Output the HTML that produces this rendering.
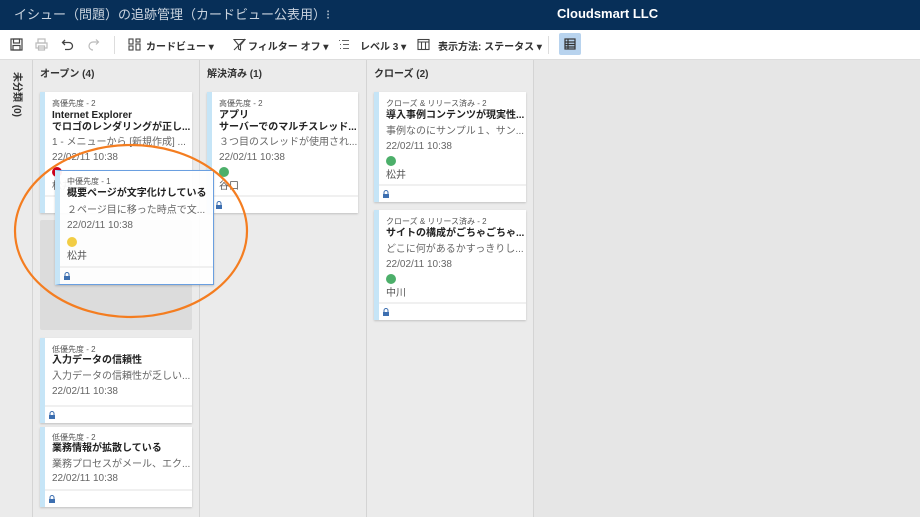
<!DOCTYPE html>
<html><head><meta charset="utf-8"><style>
*{margin:0;padding:0;box-sizing:border-box}
body{width:920px;height:517px;overflow:hidden;background:#e6e6e6;font-family:"Liberation Sans","Noto Sans CJK JP",sans-serif;position:relative;color:#333}
.hdr{position:absolute;left:0;top:0;width:920px;height:30px;background:#072f58;color:#fff}
.tb{position:absolute;left:0;top:30px;width:920px;height:30px;background:#fff;border-bottom:1px solid #ddd}
.a{position:absolute;white-space:nowrap}
.col{position:absolute;top:60px;height:457px;background:#ebebeb;border-right:1px solid #d4d4d4}
.ch{position:absolute;top:68px;font-size:10px;font-weight:bold;color:#333;line-height:14px}
.card{position:absolute;background:#fff;box-shadow:0 1px 2px rgba(0,0,0,.18);border-left:5px solid #c6e5f7;overflow:hidden}
.card div{line-height:12px}
.card .l{position:absolute;left:7px;font-size:8px;color:#555;white-space:nowrap}
.card .t{position:absolute;left:7px;font-size:10px;font-weight:bold;color:#222;white-space:nowrap}
.card .d{position:absolute;left:7px;font-size:10px;color:#666;white-space:nowrap}
.card .n{position:absolute;left:7px;font-size:10px;color:#555;white-space:nowrap}
.card .dot{position:absolute;left:7px;width:10px;height:10px;border-radius:50%}
.card .f{position:absolute;left:0;right:0;bottom:0;height:18px;border-top:2px solid #f0f0f0}
.lock{position:absolute;left:3px;top:4px;width:8px;height:8px}
</style></head><body>
<div class="hdr">
<div class="a" style="left:14px;top:6px;font-size:13px;color:#c9d3de;line-height:17px">イシュー（問題）の追跡管理（カードビュー公表用）⁝</div>
<div class="a" style="left:557px;top:5px;font-size:13px;font-weight:bold;line-height:17px">Cloudsmart LLC</div>
</div>
<div class="tb">
<svg class="a" style="left:10px;top:8px" width="13" height="13" viewBox="0 0 13 13" fill="none" stroke="#444" stroke-width="1.2"><rect x="1" y="1" width="11" height="11"/><rect x="3.5" y="1" width="6" height="4"/><rect x="3" y="7.5" width="7" height="4.5"/></svg>
<svg class="a" style="left:35px;top:8px" width="13" height="13" viewBox="0 0 13 13" fill="none" stroke="#bbb" stroke-width="1.2"><rect x="3" y="1" width="7" height="4"/><rect x="1" y="5" width="11" height="5"/><rect x="3.5" y="8" width="6" height="4"/></svg>
<svg class="a" style="left:61px;top:8px" width="13" height="13" viewBox="0 0 13 13" fill="none" stroke="#444" stroke-width="1.3"><path d="M4 2 L1.5 4.5 L4 7"/><path d="M1.5 4.5 H8 A3.5 3.5 0 0 1 8 11.5 H4"/></svg>
<svg class="a" style="left:87px;top:8px" width="13" height="13" viewBox="0 0 13 13" fill="none" stroke="#bbb" stroke-width="1.2"><path d="M9 1.5 L11.5 4 L9 6.5"/><path d="M11.5 4 H6 A4 4 0 0 0 6 12"/></svg>
<div class="a" style="left:114px;top:6px;width:1px;height:18px;background:#ddd"></div>
<svg class="a" style="left:128px;top:8px" width="13" height="13" viewBox="0 0 13 13" fill="none" stroke="#444" stroke-width="1.1"><rect x="1" y="1" width="4" height="5"/><rect x="1" y="8" width="4" height="4"/><rect x="8" y="1" width="4" height="3"/><rect x="8" y="6" width="4" height="6"/></svg>
<div class="a" style="left:146px;top:8px;font-size:10px;font-weight:bold;color:#333">カードビュー ▾</div>
<svg class="a" style="left:233px;top:8px" width="13" height="13" viewBox="0 0 13 13" fill="none" stroke="#444" stroke-width="1.1"><path d="M1 1.5 H12 L7.5 7 V12 L5.5 11 V7 Z"/><path d="M1 12 L12 1"/></svg>
<div class="a" style="left:248px;top:8px;font-size:10px;font-weight:bold;color:#333">フィルター オフ ▾</div>
<svg class="a" style="left:338px;top:9px" width="12" height="11" viewBox="0 0 12 11" fill="none" stroke="#666" stroke-width="1"><path d="M1 1.5h1M4 1.5h7M2 5.5h1M5 5.5h6M2 9.5h1M5 9.5h6"/></svg>
<div class="a" style="left:360px;top:8px;font-size:10px;font-weight:bold;color:#333">レベル 3 ▾</div>
<svg class="a" style="left:417px;top:8px" width="13" height="13" viewBox="0 0 13 13" fill="none" stroke="#444" stroke-width="1.1"><rect x="1" y="1.5" width="11" height="10"/><path d="M1 4h11M4.5 4v7.5M8.5 4v7.5"/></svg>
<div class="a" style="left:438px;top:8px;font-size:10px;font-weight:bold;color:#333">表示方法: ステータス ▾</div>
<div class="a" style="left:548px;top:6px;width:1px;height:18px;background:#ddd"></div>
<div class="a" style="left:559px;top:3px;width:22px;height:22px;background:#b8d3ee;border-radius:2px"></div>
<svg class="a" style="left:564px;top:8px" width="12" height="12" viewBox="0 0 12 12" fill="none" stroke="#333" stroke-width="1.2"><rect x="1" y="1" width="10" height="10"/><path d="M1 4h10M1 6.5h10M1 9h10M4 1v10"/></svg>
</div>
<div class="col" style="left:0;width:33px"></div>
<div class="a" style="left:-14px;top:95px;width:60px;font-size:10px;font-weight:bold;color:#333;line-height:14px;transform:rotate(90deg);transform-origin:center center">未分類 (0)</div>
<div class="col" style="left:33px;width:167px"></div>
<div class="col" style="left:200px;width:167px"></div>
<div class="col" style="left:367px;width:167px"></div>
<div class="ch" style="left:40px">オープン (4)</div>
<div class="ch" style="left:207px">解決済み (1)</div>
<div class="ch" style="left:374px">クローズ (2)</div>

<div class="card" style="left:40px;top:92px;width:152px;height:121px">
<div class="l" style="top:6px">高優先度 - 2</div>
<div class="t" style="top:18px">Internet Explorer<br>でロゴのレンダリングが正し...</div>
<div class="d" style="top:45px">1 - メニューから [新規作成] ...</div>
<div class="d" style="top:60px">22/02/11 10:38</div>
<div class="dot" style="top:75px;background:#d0021b"></div>
<div class="n" style="top:89px">松井</div>
<div class="f"></div>
</div>
<div class="a" style="left:40px;top:220px;width:152px;height:110px;background:#dcdcdc;border-radius:2px"></div>

<div class="card" style="left:40px;top:338px;width:152px;height:85px">
<div class="l" style="top:6px">低優先度 - 2</div>
<div class="t" style="top:17px">入力データの信頼性</div>
<div class="d" style="top:33px">入力データの信頼性が乏しい...</div>
<div class="d" style="top:48px">22/02/11 10:38</div>
<div class="f"><svg class="lock" viewBox="0 0 8 8"><path d="M2 4V2.5a2 2 0 0 1 4 0V4" fill="none" stroke="#3d6fb0" stroke-width="1"/><rect x="1" y="4" width="6" height="4" fill="#3d6fb0"/></svg></div>
</div>
<div class="card" style="left:40px;top:427px;width:152px;height:80px">
<div class="l" style="top:5px">低優先度 - 2</div>
<div class="t" style="top:16px">業務情報が拡散している</div>
<div class="d" style="top:32px">業務プロセスがメール、エク...</div>
<div class="d" style="top:46px">22/02/11 10:38</div>
<div class="f"><svg class="lock" viewBox="0 0 8 8"><path d="M2 4V2.5a2 2 0 0 1 4 0V4" fill="none" stroke="#3d6fb0" stroke-width="1"/><rect x="1" y="4" width="6" height="4" fill="#3d6fb0"/></svg></div>
</div>

<div class="card" style="left:207px;top:92px;width:151px;height:121px">
<div class="l" style="top:6px">高優先度 - 2</div>
<div class="t" style="top:18px">アプリ<br>サーバーでのマルチスレッド...</div>
<div class="d" style="top:45px">３つ目のスレッドが使用され...</div>
<div class="d" style="top:60px">22/02/11 10:38</div>
<div class="dot" style="top:75px;background:#4caf6a"></div>
<div class="n" style="top:89px">谷口</div>
<div class="f"><svg class="lock" viewBox="0 0 8 8"><path d="M2 4V2.5a2 2 0 0 1 4 0V4" fill="none" stroke="#3d6fb0" stroke-width="1"/><rect x="1" y="4" width="6" height="4" fill="#3d6fb0"/></svg></div>
</div>

<div class="card" style="left:374px;top:92px;width:152px;height:110px">
<div class="l" style="top:6px">クローズ &amp; リリース済み - 2</div>
<div class="t" style="top:18px">導入事例コンテンツが現実性...</div>
<div class="d" style="top:34px">事例なのにサンプル１、サン...</div>
<div class="d" style="top:49px">22/02/11 10:38</div>
<div class="dot" style="top:64px;background:#4caf6a"></div>
<div class="n" style="top:78px">松井</div>
<div class="f"><svg class="lock" viewBox="0 0 8 8"><path d="M2 4V2.5a2 2 0 0 1 4 0V4" fill="none" stroke="#3d6fb0" stroke-width="1"/><rect x="1" y="4" width="6" height="4" fill="#3d6fb0"/></svg></div>
</div>
<div class="card" style="left:374px;top:210px;width:152px;height:110px">
<div class="l" style="top:6px">クローズ &amp; リリース済み - 2</div>
<div class="t" style="top:18px">サイトの構成がごちゃごちゃ...</div>
<div class="d" style="top:34px">どこに何があるかすっきりし...</div>
<div class="d" style="top:49px">22/02/11 10:38</div>
<div class="dot" style="top:64px;background:#4caf6a"></div>
<div class="n" style="top:78px">中川</div>
<div class="f"><svg class="lock" viewBox="0 0 8 8"><path d="M2 4V2.5a2 2 0 0 1 4 0V4" fill="none" stroke="#3d6fb0" stroke-width="1"/><rect x="1" y="4" width="6" height="4" fill="#3d6fb0"/></svg></div>
</div>

<div class="card" style="left:55px;top:170px;width:159px;height:115px;border:1px solid #6a9fe0;border-left:5px solid #c6e5f7;background:rgba(255,255,255,.93)">
<div class="l" style="top:5px">中優先度 - 1</div>
<div class="t" style="top:17px">概要ページが文字化けしている</div>
<div class="d" style="top:34px">２ページ目に移った時点で文...</div>
<div class="d" style="top:49px">22/02/11 10:38</div>
<div class="dot" style="top:66px;background:#f2cd45"></div>
<div class="n" style="top:80px">松井</div>
<div class="f"><svg class="lock" viewBox="0 0 8 8"><path d="M2 4V2.5a2 2 0 0 1 4 0V4" fill="none" stroke="#3d6fb0" stroke-width="1"/><rect x="1" y="4" width="6" height="4" fill="#3d6fb0"/></svg></div>
</div>

<svg class="a" style="left:0;top:0" width="920" height="517"><ellipse cx="131" cy="231" rx="116" ry="86" fill="none" stroke="#f47d20" stroke-width="2.2"/></svg>
</body></html>
